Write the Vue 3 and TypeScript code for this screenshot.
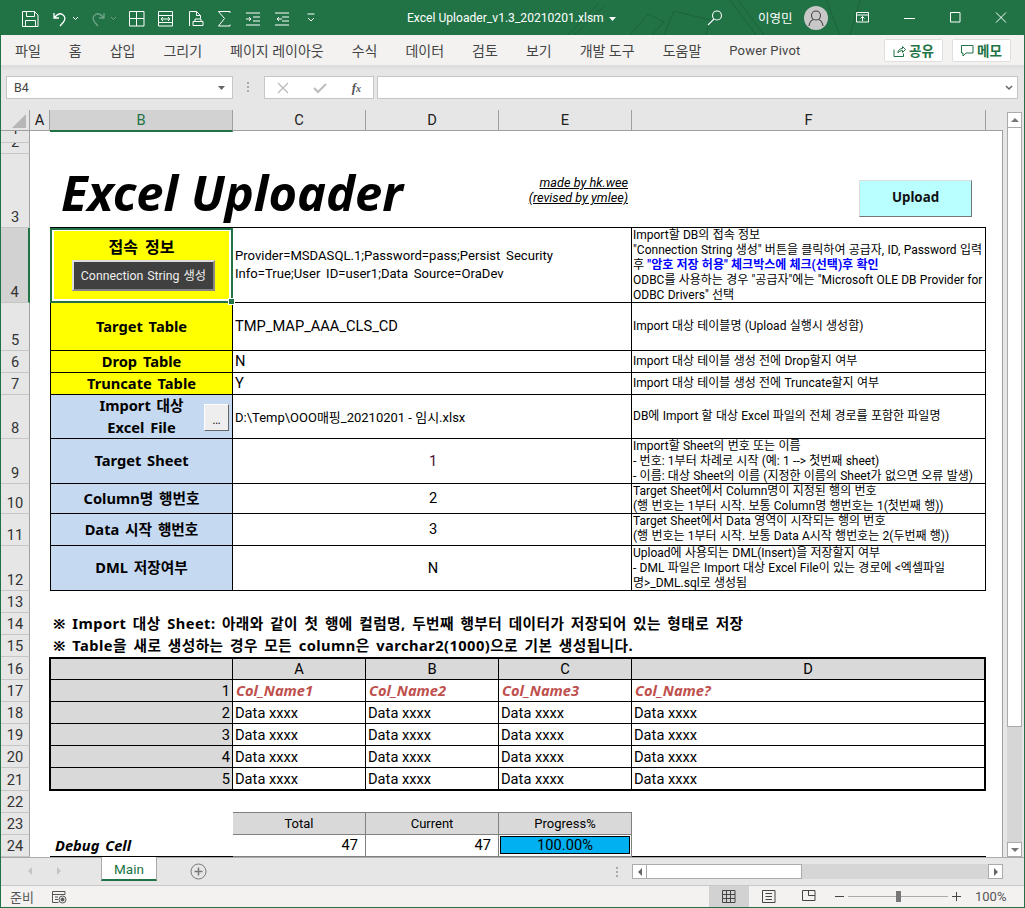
<script setup lang="ts">
interface Cell {
  r: number
  c: number
  span?: number
  lines: string[]
  cls: string
}

const colHeads = [
  { label: 'A', cls: '' },
  { label: 'B', cls: 'active' },
  { label: 'C', cls: '' },
  { label: 'D', cls: '' },
  { label: 'E', cls: '' },
  { label: 'F', cls: '' },
]

// heights of sheet rows 1..24, in px
const rowHeights = [12, 11, 74, 75, 48, 22, 22, 44, 45, 30, 32, 45, 22, 22, 22, 23, 22, 22, 22, 22, 23, 22, 22, 22]
const gridRows = rowHeights.map((h) => h + 'px').join(' ')

const tabs = ['파일', '홈', '삽입', '그리기', '페이지 레이아웃', '수식', '데이터', '검토', '보기', '개발 도구', '도움말', 'Power Pivot']

const cells: Cell[] = [
  { r: 5, c: 3, lines: ['Target Table'], cls: 'box lead yellow label' },
  { r: 6, c: 3, lines: ['Drop Table'], cls: 'box lead yellow label' },
  { r: 7, c: 3, lines: ['Truncate Table'], cls: 'box lead yellow label' },
  { r: 9, c: 3, lines: ['Target Sheet'], cls: 'box lead blue label' },
  { r: 10, c: 3, lines: ['Column명 행번호'], cls: 'box lead blue label' },
  { r: 11, c: 3, lines: ['Data 시작 행번호'], cls: 'box lead blue label' },
  { r: 12, c: 3, lines: ['DML 저장여부'], cls: 'box lead blue label' },

  { r: 4, c: 4, span: 3, lines: ['Provider=MSDASQL.1;Password=pass;Persist Security', 'Info=True;User ID=user1;Data Source=OraDev'], cls: 'box conn' },
  { r: 5, c: 4, span: 3, lines: ['TMP_MAP_AAA_CLS_CD'], cls: 'box big mid' },
  { r: 6, c: 4, span: 3, lines: ['N'], cls: 'box big' },
  { r: 7, c: 4, span: 3, lines: ['Y'], cls: 'box big' },
  { r: 8, c: 4, span: 3, lines: ['D:\\Temp\\OOO매핑_20210201 - 임시.xlsx'], cls: 'box path mid' },
  { r: 9, c: 4, span: 3, lines: ['1'], cls: 'box big mid center maroon' },
  { r: 10, c: 4, span: 3, lines: ['2'], cls: 'box big mid center' },
  { r: 11, c: 4, span: 3, lines: ['3'], cls: 'box big mid center' },
  { r: 12, c: 4, span: 3, lines: ['N'], cls: 'box big mid center' },

  { r: 5, c: 7, lines: ['Import 대상 테이블명 (Upload 실행시 생성함)'], cls: 'box desc mid' },
  { r: 6, c: 7, lines: ['Import 대상 테이블 생성 전에 Drop할지 여부'], cls: 'box desc mid' },
  { r: 7, c: 7, lines: ['Import 대상 테이블 생성 전에 Truncate할지 여부'], cls: 'box desc mid' },
  { r: 8, c: 7, lines: ['DB에 Import 할 대상 Excel 파일의 전체 경로를 포함한 파일명'], cls: 'box desc mid' },
  { r: 9, c: 7, lines: ['Import할 Sheet의 번호 또는 이름', '- 번호: 1부터 차례로 시작 (예: 1 --> 첫번째 sheet)', '- 이름: 대상 Sheet의 이름 (지정한 이름의 Sheet가 없으면 오류 발생)'], cls: 'box desc' },
  { r: 10, c: 7, lines: ['Target Sheet에서 Column명이 지정된 행의 번호', '(행 번호는 1부터 시작. 보통 Column명 행번호는 1(첫번째 행))'], cls: 'box desc' },
  { r: 11, c: 7, lines: ['Target Sheet에서 Data 영역이 시작되는 행의 번호', '(행 번호는 1부터 시작. 보통 Data A시작 행번호는 2(두번째 행))'], cls: 'box desc' },
  { r: 12, c: 7, lines: ['Upload에 사용되는 DML(Insert)을 저장할지 여부', '- DML 파일은 Import 대상 Excel File이 있는 경로에 <엑셀파일', '명>_DML.sql로 생성됨'], cls: 'box desc' },

  { r: 14, c: 3, span: 5, lines: ['※ Import 대상 Sheet: 아래와 같이 첫 행에 컬럼명, 두번째 행부터 데이터가 저장되어 있는 형태로 저장'], cls: 'note' },
  { r: 15, c: 3, span: 5, lines: ['※ Table을 새로 생성하는 경우 모든 column은 varchar2(1000)으로 기본 생성됩니다.'], cls: 'note' },

  { r: 23, c: 4, lines: ['Total'], cls: 'stat head' },
  { r: 23, c: 5, lines: ['Current'], cls: 'stat head' },
  { r: 23, c: 6, lines: ['Progress%'], cls: 'stat head' },
  { r: 24, c: 3, lines: ['Debug Cell'], cls: 'debug' },
  { r: 24, c: 4, lines: ['47'], cls: 'stat num' },
  { r: 24, c: 5, lines: ['47'], cls: 'stat num' },
  { r: 24, c: 7, lines: [], cls: 'under' },
]

// sample table, rows 16..21, columns B..F
const sample = [
  ['', 'A', 'B', 'C', 'D'],
  ['1', 'Col_Name1', 'Col_Name2', 'Col_Name3', 'Col_Name?'],
  ['2', 'Data xxxx', 'Data xxxx', 'Data xxxx', 'Data xxxx'],
  ['3', 'Data xxxx', 'Data xxxx', 'Data xxxx', 'Data xxxx'],
  ['4', 'Data xxxx', 'Data xxxx', 'Data xxxx', 'Data xxxx'],
  ['5', 'Data xxxx', 'Data xxxx', 'Data xxxx', 'Data xxxx'],
]
sample.forEach((row, y) => {
  row.forEach((text, x) => {
    const cls = ['sample']
    if (y === 0) cls.push('top')
    if (y === 5) cls.push('bottom')
    if (x === 0) cls.push('left', 'grey', 'num')
    if (x === 4) cls.push('right')
    if (y === 0) cls.push('grey', 'center')
    if (y === 1 && x > 0) cls.push('colname')
    cells.push({ r: 16 + y, c: 3 + x, lines: [text], cls: cls.join(' ') })
  })
})

function place(cell: Cell) {
  return { gridRow: cell.r, gridColumn: `${cell.c} / span ${cell.span ?? 1}` }
}
</script>

<template>
  <div class="window">
    <header class="titlebar">
      <svg class="doodle" width="320" height="35" viewBox="0 0 320 35">
        <g fill="none" stroke="#1c6439" stroke-width="1">
          <path d="M8 35 L38 4 M14 35 L44 6" />
          <path d="M70 35 L88 14 L104 22 L92 35" />
          <path d="M104 35 L114 11 L150 20 L146 35" />
          <path d="M170 0 L196 35 M178 0 L204 35" />
          <path d="M266 0 L280 35 M300 0 L290 35" />
        </g>
      </svg>
      <svg class="qat" width="320" height="35" viewBox="0 0 320 35" fill="none" stroke="#fff" stroke-width="1">
        <path d="M22.5 11.5h12l3.5 3.5v11.5h-15.500z" />
        <path d="M26.500 11.500v5h8v-5M25.500 26.500v-6h10v6" />
        <path d="M54 13v5h5M54.500 17.500c3-3.500 6-4.500 8-3 3 2 3 5 1 7.500l-3.500 4" stroke-width="1.300" />
        <path d="M73 17l2.500 2.500 2.500-2.500" />
        <g opacity=".35">
          <path d="M104 13v5h-5M103.500 17.500c-3-3.500-6-4.500-8-3-3 2-3 5-1 7.500l3.500 4" stroke-width="1.300" />
          <path d="M111 17l2.500 2.500 2.500-2.500" />
        </g>
        <path d="M129.500 11.500h14.500v14.500h-14.500zM136.500 11.500v14.500M129.500 18.500h14.500" />
        <path d="M158.500 11.500h14v14.500h-14zM158.500 15.500h14M158.500 22.500h14M161 19h9M163 17l-2 2 2 2M168 17l2 2-2 2" />
        <path d="M189.500 26v-14.500h7l4 4v3M196.500 11.500v4h4M193 21.500h10v4h-10zM195 21.500v-2.500h6v2.500" />
        <path d="M230 13v-1.500h-11.500l6 7-6 7.500h11.500v-1.500" />
        <path d="M246 13h14M253 17h7M253 21h7M246 25h14M246 19h5M249 17l2 2-2 2" />
        <path d="M275 13h14M282 17h7M282 21h7M275 25h14M277 19h5M279 17l-2 2 2 2" />
        <path d="M307.500 14h7M308 18l3 3 3-3" />
      </svg>
      <span class="doc">Excel Uploader_v1.3_20210201.xlsm</span>
      <svg class="caret" width="8" height="5" viewBox="0 0 8 5"><path d="M0 0h7l-3.500 4z" fill="#fff" /></svg>
      <svg class="search" width="16" height="16" viewBox="0 0 16 16" fill="none" stroke="#fff" stroke-width="1.100">
        <circle cx="10" cy="5.500" r="4.500" />
        <path d="M7 9L1 15" />
      </svg>
      <span class="user">이영민</span>
      <span class="avatar">
        <svg width="24" height="24" viewBox="0 0 24 24" fill="none" stroke="#444" stroke-width="1.100">
          <circle cx="12" cy="9.500" r="4.500" />
          <path d="M5 20c.5-4 3-6 4.500-6.500M19 20c-.5-4-3-6-4.500-6.500" />
        </svg>
      </span>
      <svg class="winctl" width="170" height="35" viewBox="0 0 170 35" fill="none" stroke="#fff" stroke-width="1">
        <path d="M1.500 12.500h12v9.500h-12zM1.500 15h12M7.500 21v-4.500M5.500 18.500l2-2 2 2" />
        <path d="M49 18.500h11" />
        <path d="M95.500 12.500h9.500v9.500h-9.500z" />
        <path d="M141 12.500l10 10M151 12.500l-10 10" />
      </svg>
    </header>

    <nav class="ribbon">
      <span v-for="tab in tabs" :key="tab" class="rtab">{{ tab }}</span>
      <div class="ribbon-actions">
        <button class="rbtn">
          <svg width="13" height="13" viewBox="0 0 13 13" fill="none" stroke="#217346" stroke-width="1">
            <path d="M1 5.500v7h9.500v-3M5 9c0-3 2-4.500 4.500-4.500V2.500L12.500 5.500 9.500 8.500V6.500C7.500 6.500 6 7.500 5 9z" />
          </svg>
          공유
        </button>
        <button class="rbtn">
          <svg width="13" height="13" viewBox="0 0 13 13" fill="none" stroke="#217346" stroke-width="1">
            <path d="M.5 1.500h11.500v7.500h-7l-3 3v-3h-1.500z" />
          </svg>
          메모
        </button>
      </div>
    </nav>

    <section class="formula">
      <div class="namebox">
        <span>B4</span>
        <svg width="7" height="4" viewBox="0 0 7 4"><path d="M0 0h7L3.500 4z" fill="#666" /></svg>
      </div>
      <span class="vdots"></span>
      <div class="fxbox">
        <svg width="12" height="12" viewBox="0 0 12 12" fill="none" stroke="#bdbdbd" stroke-width="1.400"><path d="M1 1l10 10M11 1L1 11" /></svg>
        <svg width="14" height="12" viewBox="0 0 14 12" fill="none" stroke="#bdbdbd" stroke-width="2"><path d="M1 6l4 4 8-8" /></svg>
        <span class="fx">f<small>x</small></span>
      </div>
      <div class="fxinput">
        <svg width="8" height="6" viewBox="0 0 8 6" fill="none" stroke="#666" stroke-width="1.500"><path d="M1 1l3 3 3-3" /></svg>
      </div>
    </section>

    <section class="body">
      <div class="pane">
        <div class="colheads">
          <div class="corner"><span class="tri"></span></div>
          <div v-for="col in colHeads" :key="col.label" class="colhead" :class="col.cls">{{ col.label }}</div>
          <div class="colhead filler"></div>
        </div>

        <div class="sheet" :style="{ gridTemplateRows: gridRows }">
          <div
            v-for="(h, i) in rowHeights"
            :key="i"
            class="rowhead"
            :class="{ active: i === 3, clip1: i === 0, clip2: i === 1 }"
            :style="{ gridRow: i + 1 }"
          >
            <span>{{ i + 1 }}</span>
          </div>

          <!-- title row -->
          <div class="titlecell">
            <span class="bigtitle">Excel Uploader</span>
            <div class="credit">
              <div>made by hk.wee</div>
              <div>(revised by ymlee)</div>
            </div>
          </div>
          <div class="uploadcell">
            <button class="upload">Upload</button>
          </div>

          <!-- selected cell with its floating button -->
          <div class="cell box lead yellow label b4">
            <div class="b4-title">접속 정보</div>
            <button class="connbtn">Connection String 생성</button>
            <span class="handle"></span>
          </div>

          <div class="cell box desc f4">
            <div>Import할 DB의 접속 정보</div>
            <div>"Connection String 생성" 버튼을 클릭하여 공급자, ID, Password 입력</div>
            <div>후 <b class="accent">"암호 저장 허용" 체크박스에 체크(선택)후 확인</b></div>
            <div>ODBC를 사용하는 경우 "공급자"에는 "Microsoft OLE DB Provider for</div>
            <div>ODBC Drivers" 선택</div>
          </div>

          <div class="cell box lead blue label b8">
            <div>Import 대상</div>
            <div>Excel File</div>
            <button class="pick">...</button>
          </div>

          <div
            v-for="(cell, i) in cells"
            :key="i"
            class="cell"
            :class="cell.cls"
            :style="place(cell)"
          >
            <div v-for="(line, j) in cell.lines" :key="j">{{ line }}</div>
          </div>

          <div class="cell stat progress">
            <div class="bar">100.00%</div>
          </div>
          <div class="edge"></div>
        </div>
      </div>

      <aside class="vscroll">
        <div class="sbtn up"><span class="arrow-up"></span></div>
        <div class="vthumb"></div>
        <div class="vtrack"></div>
        <div class="sbtn"><span class="arrow-down"></span></div>
      </aside>
    </section>

    <section class="tabbar">
      <div class="tabnav">
        <span class="arrow-left"></span>
        <span class="arrow-right"></span>
      </div>
      <div class="tab">Main</div>
      <svg class="addsheet" width="17" height="17" viewBox="0 0 17 17" fill="none" stroke="#777">
        <circle cx="8.500" cy="8.500" r="7.500" />
        <path d="M8.500 4.500v8M4.500 8.500h8" stroke-width="1.500" />
      </svg>
      <span class="vdots tabdots"></span>
      <div class="hscroll">
        <div class="sbtn side"><span class="arrow-left dark"></span></div>
        <div class="hthumb"></div>
        <div class="htrack"></div>
        <div class="sbtn side"><span class="arrow-right dark"></span></div>
      </div>
    </section>

    <footer class="status">
      <span class="ready">준비</span>
      <svg class="macro" width="15" height="14" viewBox="0 0 15 14" fill="none" stroke="#555">
        <path d="M.500 1.500h12.500v3M.500 1.500v11h6M.500 4.500h12.500M3 7h3M3 9.500h3" />
        <circle cx="10.500" cy="9.500" r="3.500" />
        <circle cx="10.500" cy="9.500" r="1.500" fill="#555" />
      </svg>
      <div class="views">
        <span class="view on">
          <svg width="14" height="13" viewBox="0 0 14 13" fill="none" stroke="#444"><path d="M.500.500h12.500v12h-12.500zM.500 4.500h12.500M.500 8.500h12.500M4.500.500v12M8.500.500v12" /></svg>
        </span>
        <span class="view">
          <svg width="14" height="13" viewBox="0 0 14 13" fill="none" stroke="#444"><path d="M.500.500h12.500v12h-12.500zM3.500 3.500h6.500M3.500 6.500h6.500M3.500 9.500h6.500" /></svg>
        </span>
        <span class="view">
          <svg width="14" height="13" viewBox="0 0 14 13" fill="none" stroke="#444"><path d="M.500.500h12.500v10h-12.500zM6.500.500v5h6.500" /></svg>
        </span>
      </div>
      <div class="zoom">
        <span class="zsign"></span>
        <div class="zline"><span class="zthumb"></span></div>
        <span class="zsign plus"></span>
      </div>
      <span class="zpct">100%</span>
    </footer>
  </div>
</template>

<style>
html,
body {
  margin: 0;
  background: #fff;
}
</style>

<style scoped>
.window {
  width: 1025px;
  height: 908px;
  box-sizing: border-box;
  border-left: 1px solid #217346;
  border-right: 1px solid #217346;
  border-bottom: 1px solid #217346;
  display: flex;
  flex-direction: column;
  overflow: hidden;
  font-family: Roboto, "Noto Sans CJK KR", sans-serif;
  color: #000;
}
button {
  font-family: inherit;
  padding: 0;
}

/* title bar */
.titlebar {
  height: 35px;
  flex: none;
  margin-left: -1px;
  margin-right: -1px;
  background: #217346;
  color: #fff;
  display: flex;
  align-items: center;
  position: relative;
}
.doodle {
  position: absolute;
  left: 560px;
  top: 0;
}
.qat {
  flex: none;
  position: relative;
}
.doc {
  margin-left: 87px;
  font-size: 12.100px;
  width: 197px;
  white-space: nowrap;
  position: relative;
}
.caret {
  margin-left: 5px;
  margin-top: 3px;
  position: relative;
}
.search {
  margin-left: 90px;
  position: relative;
}
.user {
  margin-left: 35px;
  font-size: 12.500px;
  width: 46px;
  position: relative;
}
.avatar {
  width: 24px;
  height: 24px;
  border-radius: 50%;
  background: #c8c8c8;
  display: flex;
  position: relative;
}
.winctl {
  margin-left: 27px;
  flex: none;
  position: relative;
}

/* ribbon tabs */
.ribbon {
  height: 30px;
  flex: none;
  background: #f3f2f1;
  display: flex;
  align-items: center;
  padding-left: 14px;
  gap: 28px;
  font-size: 14px;
  color: #444;
}
.rtab {
  white-space: nowrap;
}
.rtab:nth-child(12) {
  font-size: 13px;
  letter-spacing: 0.2px;
}
.ribbon-actions {
  margin-left: auto;
  margin-right: 13px;
  display: flex;
  gap: 9px;
}
.rbtn {
  width: 59px;
  height: 23px;
  background: #fff;
  border: 1px solid #e1dfdd;
  border-radius: 2px;
  color: #217346;
  font-size: 13.500px;
  font-weight: 700;
  display: flex;
  align-items: center;
  justify-content: center;
  gap: 3px;
}

/* formula bar */
.formula {
  height: 45px;
  flex: none;
  box-sizing: border-box;
  background: linear-gradient(#dcdcdc, #e6e6e6 6px);
  display: flex;
  padding: 11px 0 0 5px;
  align-items: flex-start;
}
.namebox,
.fxbox,
.fxinput {
  height: 23px;
  box-sizing: border-box;
  background: #fff;
  border: 1px solid #c6c6c6;
  display: flex;
  align-items: center;
}
.namebox {
  width: 227px;
  justify-content: space-between;
  padding: 0 7px;
  font-size: 12.500px;
  color: #444;
}
.vdots {
  width: 2px;
  height: 10px;
  margin: 6px 15px 0 14px;
  background: repeating-linear-gradient(#aaa 0 2px, transparent 2px 4px);
}
.fxbox {
  width: 110px;
  padding: 0 12px;
  justify-content: space-between;
}
.fx {
  font-family: "Liberation Serif", serif;
  font-style: italic;
  font-weight: 700;
  font-size: 13px;
  color: #555;
}
.fx small {
  font-size: 10px;
}
.fxinput {
  width: 641px;
  margin-left: 3px;
  justify-content: flex-end;
  padding-right: 4px;
}

/* sheet */
.body {
  height: 747px;
  flex: none;
  display: flex;
  background: #e6e6e6;
}
.pane {
  width: 1002px;
  flex: none;
}
.colheads,
.sheet {
  display: grid;
  grid-template-columns: 29px 20px 183px 133px 133px 133px 354px 17px;
}
.colheads {
  height: 20px;
  border-bottom: 1px solid #a0a0a0;
}
.corner {
  position: relative;
  border-right: 1px solid #a0a0a0;
}
.tri {
  position: absolute;
  right: 3px;
  bottom: 3px;
  border-left: 14px solid transparent;
  border-bottom: 14px solid #b7b7b7;
}
.colhead {
  border-right: 1px solid #a0a0a0;
  font-size: 14.670px;
  line-height: 20px;
  text-align: center;
  color: #222;
}
.colhead.active {
  background: #d2d2d2;
  border-bottom: 2px solid #217346;
  margin-bottom: -1px;
  color: #217346;
}
.colhead.filler {
  border-right: 0;
}
.sheet {
  height: 726px;
  background: #fff;
  overflow: hidden;
}
.rowhead {
  grid-column: 1;
  background: #e6e6e6;
  border-right: 1px solid #a0a0a0;
  border-bottom: 1px solid #c6c6c6;
  display: flex;
  align-items: flex-end;
  justify-content: center;
  overflow: hidden;
  font-size: 14.670px;
  line-height: 20px;
  color: #333;
}
.rowhead.active {
  background: #d2d2d2;
  border-right: 2px solid #217346;
}
.rowhead.clip1 {
  padding-bottom: 3px;
}
.rowhead.clip2 {
  padding-bottom: 1px;
}
.edge {
  grid-column: 8;
  grid-row: 1 / span 24;
  border-right: 1px solid #a0a0a0;
}

.titlecell {
  grid-row: 3;
  grid-column: 3 / span 4;
  border-bottom: 1px solid #000;
  display: flex;
  justify-content: space-between;
  align-items: flex-start;
}
.bigtitle {
  font-family: "Noto Sans", "Noto Sans CJK KR", sans-serif;
  font-size: 48.900px;
  line-height: 60px;
  font-weight: 700;
  font-style: italic;
  margin: 8px 0 0 11px;
  white-space: nowrap;
}
.credit {
  margin: 21px 4px 0 0;
  font-size: 12.700px;
  line-height: 15px;
  font-style: italic;
  text-align: right;
  text-decoration: underline;
}
.uploadcell {
  grid-row: 3;
  grid-column: 7;
  border-bottom: 1px solid #000;
  position: relative;
}
.upload {
  position: absolute;
  left: 227px;
  top: 26px;
  width: 113px;
  height: 37px;
  padding-bottom: 3px;
  background: #b9ffff;
  border: 1px solid;
  border-color: #ddd #777 #777 #ddd;
  font-family: "Noto Sans", sans-serif;
  font-size: 13.330px;
  font-weight: 700;
  color: #111;
}

.cell {
  min-width: 0;
  white-space: nowrap;
  box-sizing: border-box;
}
.box {
  border-right: 1px solid #000;
  border-bottom: 1px solid #000;
}
.lead {
  border-left: 1px solid #000;
}
.yellow {
  background: #ff0;
}
.blue {
  background: #c5d9f1;
}
.label {
  display: flex;
  flex-direction: column;
  justify-content: center;
  align-items: center;
  padding-bottom: 2px;
  font-family: "Noto Sans", "Noto Sans CJK KR", sans-serif;
  font-size: 14.670px;
  font-weight: 700;
  line-height: 22px;
  word-spacing: 2px;
}
.mid {
  display: flex;
  flex-direction: column;
  justify-content: center;
}
.center {
  align-items: center;
  text-align: center;
}
.big {
  font-size: 14.670px;
  line-height: 21px;
  padding-left: 2px;
}
.big.mid {
  line-height: 20px;
  padding-bottom: 1px;
}
.maroon {
  color: #4a1030;
}
.conn {
  display: flex;
  flex-direction: column;
  justify-content: center;
  font-size: 13.100px;
  line-height: 18px;
  word-spacing: 2.500px;
  padding-left: 2px;
}
.path {
  font-size: 13px;
  padding-left: 2px;
}
.desc {
  font-size: 12px;
  line-height: 15px;
  word-spacing: 0.300px;
  padding-left: 1px;
}
.f4 {
  grid-row: 4;
  grid-column: 7;
}
.accent {
  color: #00f;
}
.b4 {
  grid-row: 4;
  grid-column: 3;
  position: relative;
  justify-content: flex-start;
  outline: 2px solid #217346;
  outline-offset: -2px;
  box-shadow: inset 0 0 0 3px #fff;
  z-index: 2;
}
.b4-title {
  margin-top: 8px;
  font-size: 16px;
  word-spacing: 3px;
}
.connbtn {
  position: absolute;
  left: 21px;
  top: 32px;
  width: 143px;
  height: 31px;
  padding-bottom: 2px;
  box-sizing: border-box;
  background: #404040;
  color: #eee;
  border: 2px solid;
  border-color: #ddd #888 #888 #ddd;
  font-family: Roboto, "Noto Sans CJK KR", sans-serif;
  font-size: 12.300px;
  font-weight: 400;
  word-spacing: 1px;
}
.handle {
  position: absolute;
  right: -3px;
  bottom: -3px;
  width: 5px;
  height: 5px;
  background: #217346;
  border: 1px solid #fff;
}
.b8 {
  grid-row: 8;
  grid-column: 3;
  position: relative;
  padding-right: 0;
}
.pick {
  position: absolute;
  left: 153px;
  top: 9px;
  width: 25px;
  height: 27px;
  background: #eee;
  border: 1px solid;
  border-color: #fff #666 #666 #fff;
  font-size: 10px;
  line-height: 30px;
  font-weight: 400;
}
.note {
  font-family: "Noto Sans", "Noto Sans CJK KR", sans-serif;
  font-size: 14.670px;
  font-weight: 700;
  line-height: 20px;
  letter-spacing: 0.450px;
  word-spacing: 2.200px;
  padding-left: 3px;
}
.sample {
  border-right: 1px solid #000;
  border-bottom: 1px solid #000;
  font-size: 14.670px;
  line-height: 23px;
  padding-left: 2px;
}
.sample.top {
  line-height: 20px;
  border-top: 2px solid #000;
}
.sample.grey {
  background: #d9d9d9;
}
.sample.center {
  text-align: center;
  padding-left: 0;
}
.sample.num {
  text-align: right;
  padding-right: 2px;
}
.sample.bottom {
  border-bottom: 2px solid #000;
}
.sample.left {
  border-left: 2px solid #000;
  margin-left: -1px;
}
.sample.right {
  border-right: 2px solid #000;
}
.colname {
  font-family: "Noto Sans", sans-serif;
  color: #c0504d;
  font-weight: 700;
  font-style: italic;
  line-height: 21px;
  padding-left: 3px;
}
.stat {
  border-right: 1px solid #808080;
  border-bottom: 1px solid #808080;
}
.stat.head {
  background: #d9d9d9;
  border-top: 1px solid #808080;
  margin-top: -1px;
  font-size: 13px;
  line-height: 21px;
  text-align: center;
}
.stat.num {
  font-size: 14.670px;
  line-height: 21px;
  text-align: right;
  padding-right: 7px;
}
.debug {
  border-bottom: 1px solid #000;
  font-family: "Noto Sans", sans-serif;
  font-size: 14.670px;
  font-weight: 700;
  font-style: italic;
  line-height: 21px;
  word-spacing: 2px;
  padding-left: 5px;
}
.under {
  border-bottom: 1px solid #000;
}
.progress {
  grid-row: 24;
  grid-column: 6;
  padding: 1px 1px 2px 1px;
}
.bar {
  height: 18px;
  box-sizing: border-box;
  background: #00b0f0;
  border: 1px solid #000;
  font-size: 14.670px;
  line-height: 17px;
  text-align: center;
}

/* scrollbars */
.vscroll {
  width: 15px;
  flex: none;
  margin-left: 4px;
  padding-top: 2px;
  display: flex;
  flex-direction: column;
}
.sbtn {
  height: 15px;
  flex: none;
  box-sizing: border-box;
  background: #fff;
  border: 1px solid #ababab;
  display: flex;
  align-items: center;
  justify-content: center;
}
.sbtn.up {
  height: 16px;
}
.vthumb {
  height: 599px;
  box-sizing: border-box;
  background: #fff;
  border: 1px solid #ababab;
  border-top: 0;
}
.vtrack {
  flex: 1;
  background: #d6d6d6;
}
.arrow-up,
.arrow-down,
.arrow-left,
.arrow-right {
  width: 0;
  height: 0;
  display: block;
}
.arrow-up {
  border: 4px solid transparent;
  border-top: 0;
  border-bottom: 4px solid #777;
}
.arrow-down {
  border: 4px solid transparent;
  border-bottom: 0;
  border-top: 4px solid #777;
}
.arrow-left {
  border: 4px solid transparent;
  border-left: 0;
  border-right: 4px solid #c4c4c4;
}
.arrow-right {
  border: 4px solid transparent;
  border-right: 0;
  border-left: 4px solid #c4c4c4;
}
.arrow-left.dark {
  border-right-color: #666;
}
.arrow-right.dark {
  border-left-color: #666;
}

/* sheet tabs */
.tabbar {
  height: 28px;
  flex: none;
  box-sizing: border-box;
  background: #e6e6e6;
  border-top: 1px solid #ababab;
  display: flex;
  align-items: flex-start;
}
.tabnav {
  width: 100px;
  flex: none;
  box-sizing: border-box;
  height: 27px;
  padding: 9px 0 0 27px;
  display: flex;
  gap: 25px;
}
.tab {
  width: 56px;
  height: 24px;
  margin-top: -1px;
  box-sizing: border-box;
  background: #fff;
  border-left: 1px solid #ababab;
  border-right: 1px solid #ababab;
  border-bottom: 2px solid #217346;
  color: #217346;
  font-size: 13.500px;
  line-height: 24px;
  text-align: center;
}
.addsheet {
  margin: 5px 0 0 33px;
}
.tabdots {
  margin: 9px 0 0 409px;
}
.hscroll {
  margin-left: 14px;
  margin-top: 6px;
  width: 371px;
  height: 15px;
  display: flex;
}
.sbtn.side {
  width: 15px;
}
.hthumb {
  width: 155px;
  box-sizing: border-box;
  background: #fff;
  border: 1px solid #ababab;
  border-left: 0;
}
.htrack {
  flex: 1;
  background: #d6d6d6;
}

/* status bar */
.status {
  height: 22px;
  flex: none;
  box-sizing: border-box;
  background: #f3f2f1;
  border-top: 1px solid #c8c8c8;
  display: flex;
  align-items: center;
  font-size: 13px;
  color: #555;
}
.ready {
  margin-left: 9px;
  width: 42px;
}
.macro {
  flex: none;
}
.views {
  margin-left: 642px;
  display: flex;
  align-self: stretch;
}
.view {
  width: 40px;
  display: flex;
  align-items: center;
  justify-content: center;
}
.view.on {
  background: #d2d2d2;
}
.zoom {
  margin-left: 6px;
  display: flex;
  align-items: center;
  gap: 4px;
}
.zsign {
  width: 9px;
  height: 1px;
  background: #444;
  position: relative;
  display: block;
}
.zsign.plus::after {
  content: "";
  position: absolute;
  left: 4px;
  top: -4px;
  width: 1px;
  height: 9px;
  background: #444;
}
.zline {
  width: 100px;
  height: 1px;
  background: #aaa;
  position: relative;
}
.zthumb {
  position: absolute;
  left: 48px;
  top: -5px;
  width: 5px;
  height: 11px;
  background: #777;
}
.zpct {
  margin-left: 14px;
  font-size: 13px;
}
</style>
